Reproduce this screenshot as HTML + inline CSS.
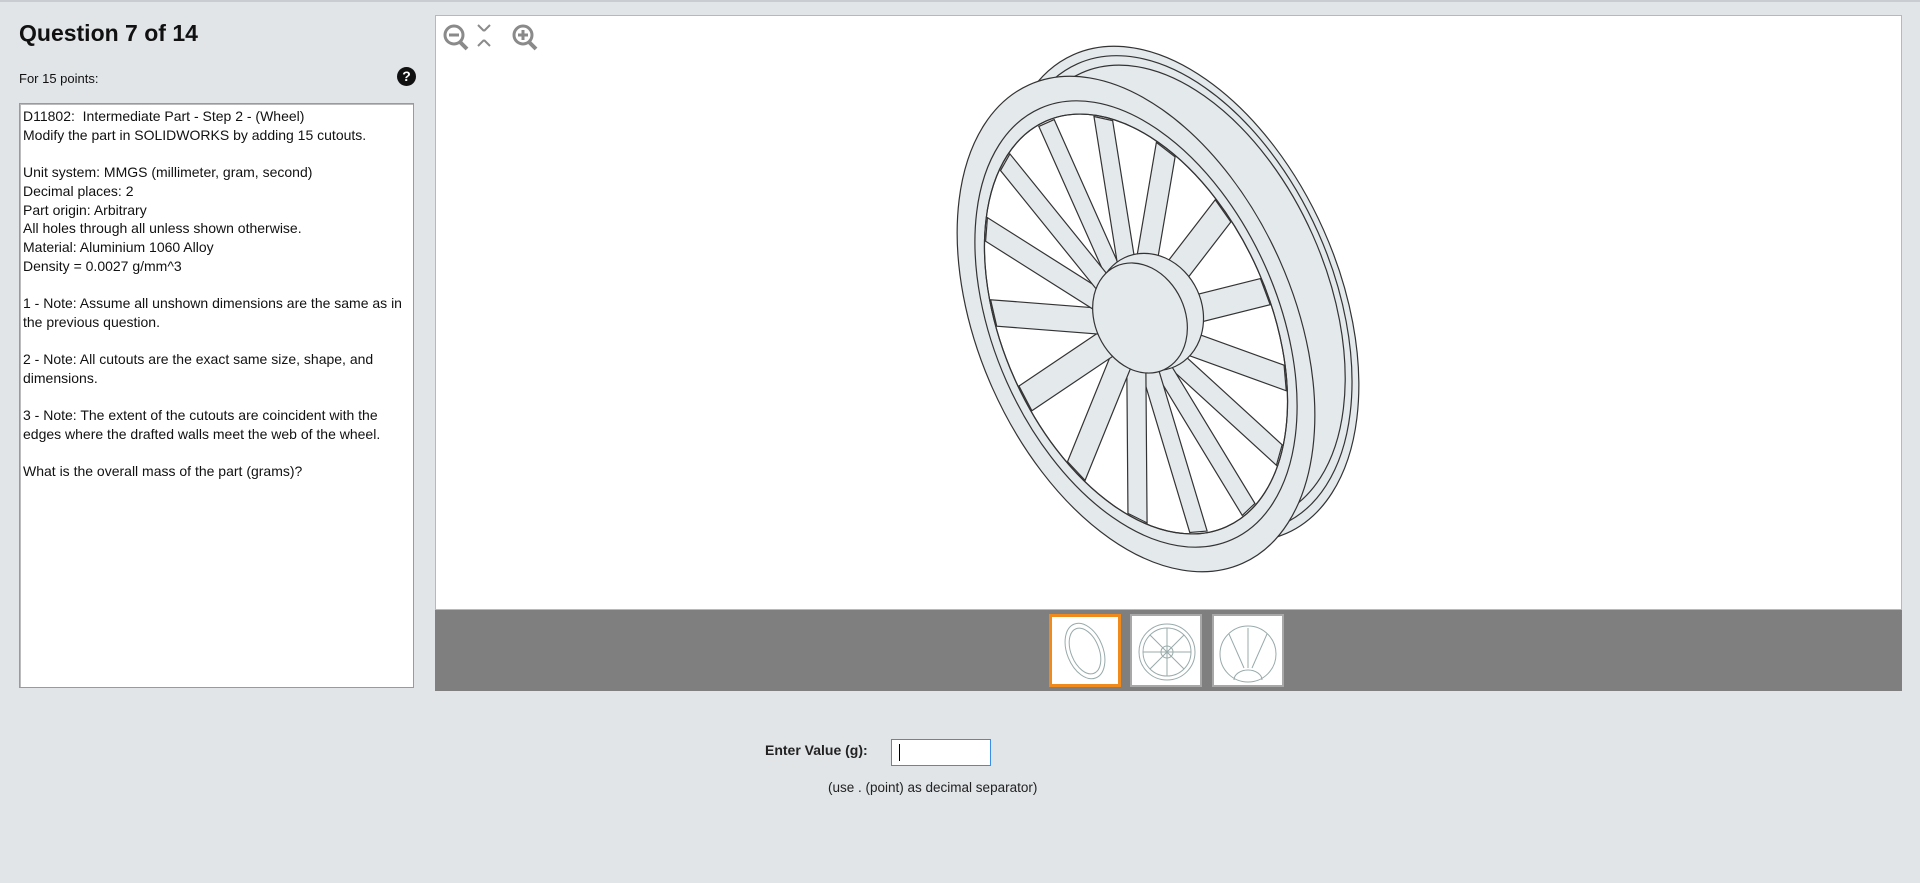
<!DOCTYPE html>
<html><head><meta charset="utf-8"><style>
html,body{margin:0;padding:0}
body{width:1920px;height:881px;background:#e1e5e8;font-family:"Liberation Sans",sans-serif;position:relative;overflow:hidden;border-top:2px solid #c9cdd1;box-sizing:border-box}
.abs{position:absolute}
h1{position:absolute;left:19px;top:18px;margin:0;font-size:23px;font-weight:bold;color:#111}
.pts{left:19px;top:69px;font-size:13px;color:#111}
.help{left:397px;top:65px;width:19px;height:19px;border-radius:50%;background:#111;color:#fff;font-weight:bold;font-size:14px;text-align:center;line-height:19px}
.box{left:19px;top:101px;width:395px;height:585px;background:#fff;border:1px solid #9a9a9a;box-shadow:inset 1px 1px 0 #bbb;font-size:14px;line-height:18.7px;color:#111;padding:3px 3px;box-sizing:border-box;white-space:pre-wrap}
.panel{left:435px;top:13px;width:1467px;height:595px;background:#fff;border:1px solid #b8b8b8;box-sizing:border-box}
.bar{left:435px;top:608px;width:1467px;height:81px;background:#7f7f7f}
.th{top:612px;width:72px;height:73px;background:#fff;border:2px solid #a8a8a8;box-sizing:border-box}
.lbl{left:765px;top:740px;font-size:14px;font-weight:bold;color:#222}
.inp{left:891px;top:737px;width:100px;height:27px;background:#fff;border:1px solid #3a8ee6;box-sizing:border-box}
.hint{left:828px;top:778px;font-size:13.5px;color:#222}
</style></head><body>
<h1>Question 7 of 14</h1>
<div class="abs pts">For 15 points:</div>
<div class="abs help">?</div>
<div class="abs box">D11802:  Intermediate Part - Step 2 - (Wheel)
Modify the part in SOLIDWORKS by adding 15 cutouts.

Unit system: MMGS (millimeter, gram, second)
Decimal places: 2
Part origin: Arbitrary
All holes through all unless shown otherwise.
Material: Aluminium 1060 Alloy
Density = 0.0027 g/mm^3

1 - Note: Assume all unshown dimensions are the same as in the previous question.

2 - Note: All cutouts are the exact same size, shape, and dimensions.

3 - Note: The extent of the cutouts are coincident with the edges where the drafted walls meet the web of the wheel.

What is the overall mass of the part (grams)?</div>
<div class="abs panel"></div>
<svg class="abs" style="left:0;top:0" width="1920" height="881">
 <g fill="none" stroke="#8a8a8a" stroke-width="3">
  <circle cx="454" cy="33" r="9"/><line x1="460" y1="40" x2="467" y2="47" stroke-width="4"/><line x1="449" y1="33" x2="459" y2="33"/>
  <circle cx="523" cy="33" r="9"/><line x1="529" y1="40" x2="536" y2="47" stroke-width="4"/><line x1="518" y1="33" x2="528" y2="33"/><line x1="523" y1="28" x2="523" y2="38"/>
  <path d="M478 23l6 6M490 23l-6 6M478 44l6-6M490 44l-6-6" stroke-width="2"/>
 </g>
 <g stroke="#333" stroke-width="1.2" fill="#e4e9ec">
  <g transform="translate(1180,292) rotate(-24) scale(0.6,1)">
   <circle r="262" vector-effect="non-scaling-stroke"/>
   <circle r="252" fill="none" vector-effect="non-scaling-stroke"/>
   <circle r="242" fill="none" vector-effect="non-scaling-stroke"/>
  </g>
  <g transform="translate(1136,322) rotate(-24) scale(0.6,1)">
   <circle r="262" vector-effect="non-scaling-stroke"/>
   <circle r="236" vector-effect="non-scaling-stroke"/>
   <circle r="222" fill="#fff" vector-effect="non-scaling-stroke"/>
   <g>
    <rect x="-14" y="-220" width="28" height="220" transform="rotate(0)" vector-effect="non-scaling-stroke"/>
    <rect x="-14" y="-220" width="28" height="220" transform="rotate(24)" vector-effect="non-scaling-stroke"/>
    <rect x="-14" y="-220" width="28" height="220" transform="rotate(48)" vector-effect="non-scaling-stroke"/>
    <rect x="-14" y="-220" width="28" height="220" transform="rotate(72)" vector-effect="non-scaling-stroke"/>
    <rect x="-14" y="-220" width="28" height="220" transform="rotate(96)" vector-effect="non-scaling-stroke"/>
    <rect x="-14" y="-220" width="28" height="220" transform="rotate(120)" vector-effect="non-scaling-stroke"/>
    <rect x="-14" y="-220" width="28" height="220" transform="rotate(144)" vector-effect="non-scaling-stroke"/>
    <rect x="-14" y="-220" width="28" height="220" transform="rotate(168)" vector-effect="non-scaling-stroke"/>
    <rect x="-14" y="-220" width="28" height="220" transform="rotate(192)" vector-effect="non-scaling-stroke"/>
    <rect x="-14" y="-220" width="28" height="220" transform="rotate(216)" vector-effect="non-scaling-stroke"/>
    <rect x="-14" y="-220" width="28" height="220" transform="rotate(240)" vector-effect="non-scaling-stroke"/>
    <rect x="-14" y="-220" width="28" height="220" transform="rotate(264)" vector-effect="non-scaling-stroke"/>
    <rect x="-14" y="-220" width="28" height="220" transform="rotate(288)" vector-effect="non-scaling-stroke"/>
    <rect x="-14" y="-220" width="28" height="220" transform="rotate(312)" vector-effect="non-scaling-stroke"/>
    <rect x="-14" y="-220" width="28" height="220" transform="rotate(336)" vector-effect="non-scaling-stroke"/>
   </g>
   <circle r="222" fill="none" vector-effect="non-scaling-stroke"/>
  </g>
  <ellipse cx="1150" cy="310" rx="52" ry="60" transform="rotate(-25 1150 310)"/>
  <ellipse cx="1140" cy="316" rx="45" ry="57" transform="rotate(-25 1140 316)"/>
 </g>
</svg>
<div class="abs bar"></div>
<div class="abs th" style="left:1049px;border-color:#f08a1c;border-width:3px"></div>
<div class="abs th" style="left:1130px"></div>
<div class="abs th" style="left:1212px"></div>
<svg class="abs" style="left:1049px;top:612px" width="240" height="74" fill="none" stroke="#9aa" stroke-width="1">
 <ellipse cx="36" cy="37" rx="18" ry="29" transform="rotate(-22 36 37)"/><ellipse cx="36" cy="37" rx="14" ry="24" transform="rotate(-22 36 37)"/>
 <circle cx="118" cy="38" r="28"/><circle cx="118" cy="38" r="24"/><circle cx="118" cy="38" r="6"/>
 <path d="M118 14v48M94 38h48M101 21l34 34M135 21l-34 34"/>
 <circle cx="199" cy="40" r="28"/><path d="M185 66a14 10 0 0 1 28 0M199 14v40M180 20l15 34M218 20l-15 34"/>
</svg>
<div class="abs lbl">Enter Value (g):</div>
<div class="abs inp"><div style="position:absolute;left:7px;top:4px;width:1px;height:17px;background:#000"></div></div>
<div class="abs hint">(use . (point) as decimal separator)</div>
</body></html>
